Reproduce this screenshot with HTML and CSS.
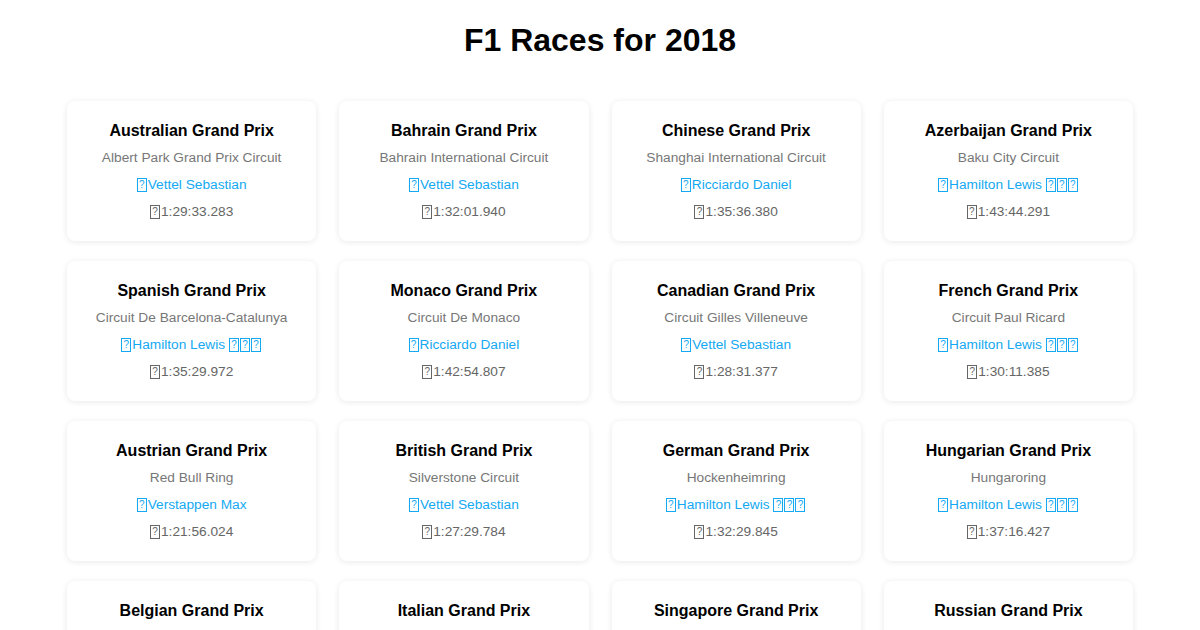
FILE: index.html
```html
<!DOCTYPE html>
<html>
<head>
<meta charset="utf-8">
<link rel="stylesheet" href="styles.css">
</head>
<body>
<div class="page">
  <h1 class="title">F1 Races for 2018</h1>
  <div class="grid">
    <div class="card"><h3>Australian Grand Prix</h3><p class="circuit">Albert Park Grand Prix Circuit</p><p class="driver"><span class="tofu">?</span>Vettel Sebastian</p><p class="time"><span class="tofu">?</span>1:29:33.283</p></div>
    <div class="card"><h3>Bahrain Grand Prix</h3><p class="circuit">Bahrain International Circuit</p><p class="driver"><span class="tofu">?</span>Vettel Sebastian</p><p class="time"><span class="tofu">?</span>1:32:01.940</p></div>
    <div class="card"><h3>Chinese Grand Prix</h3><p class="circuit">Shanghai International Circuit</p><p class="driver"><span class="tofu">?</span>Ricciardo Daniel</p><p class="time"><span class="tofu">?</span>1:35:36.380</p></div>
    <div class="card"><h3>Azerbaijan Grand Prix</h3><p class="circuit">Baku City Circuit</p><p class="driver"><span class="tofu">?</span>Hamilton Lewis <span class="tofu">?</span><span class="tofu">?</span><span class="tofu">?</span></p><p class="time"><span class="tofu">?</span>1:43:44.291</p></div>
    <div class="card"><h3>Spanish Grand Prix</h3><p class="circuit">Circuit De Barcelona-Catalunya</p><p class="driver"><span class="tofu">?</span>Hamilton Lewis <span class="tofu">?</span><span class="tofu">?</span><span class="tofu">?</span></p><p class="time"><span class="tofu">?</span>1:35:29.972</p></div>
    <div class="card"><h3>Monaco Grand Prix</h3><p class="circuit">Circuit De Monaco</p><p class="driver"><span class="tofu">?</span>Ricciardo Daniel</p><p class="time"><span class="tofu">?</span>1:42:54.807</p></div>
    <div class="card"><h3>Canadian Grand Prix</h3><p class="circuit">Circuit Gilles Villeneuve</p><p class="driver"><span class="tofu">?</span>Vettel Sebastian</p><p class="time"><span class="tofu">?</span>1:28:31.377</p></div>
    <div class="card"><h3>French Grand Prix</h3><p class="circuit">Circuit Paul Ricard</p><p class="driver"><span class="tofu">?</span>Hamilton Lewis <span class="tofu">?</span><span class="tofu">?</span><span class="tofu">?</span></p><p class="time"><span class="tofu">?</span>1:30:11.385</p></div>
    <div class="card"><h3>Austrian Grand Prix</h3><p class="circuit">Red Bull Ring</p><p class="driver"><span class="tofu">?</span>Verstappen Max</p><p class="time"><span class="tofu">?</span>1:21:56.024</p></div>
    <div class="card"><h3>British Grand Prix</h3><p class="circuit">Silverstone Circuit</p><p class="driver"><span class="tofu">?</span>Vettel Sebastian</p><p class="time"><span class="tofu">?</span>1:27:29.784</p></div>
    <div class="card"><h3>German Grand Prix</h3><p class="circuit">Hockenheimring</p><p class="driver"><span class="tofu">?</span>Hamilton Lewis <span class="tofu">?</span><span class="tofu">?</span><span class="tofu">?</span></p><p class="time"><span class="tofu">?</span>1:32:29.845</p></div>
    <div class="card"><h3>Hungarian Grand Prix</h3><p class="circuit">Hungaroring</p><p class="driver"><span class="tofu">?</span>Hamilton Lewis <span class="tofu">?</span><span class="tofu">?</span><span class="tofu">?</span></p><p class="time"><span class="tofu">?</span>1:37:16.427</p></div>
    <div class="card"><h3>Belgian Grand Prix</h3><p class="circuit">Circuit De Spa-Francorchamps</p><p class="driver"><span class="tofu">?</span>Vettel Sebastian</p><p class="time"><span class="tofu">?</span>1:23:34.476</p></div>
    <div class="card"><h3>Italian Grand Prix</h3><p class="circuit">Autodromo Nazionale Di Monza</p><p class="driver"><span class="tofu">?</span>Hamilton Lewis <span class="tofu">?</span><span class="tofu">?</span><span class="tofu">?</span></p><p class="time"><span class="tofu">?</span>1:16:54.484</p></div>
    <div class="card"><h3>Singapore Grand Prix</h3><p class="circuit">Marina Bay Street Circuit</p><p class="driver"><span class="tofu">?</span>Hamilton Lewis <span class="tofu">?</span><span class="tofu">?</span><span class="tofu">?</span></p><p class="time"><span class="tofu">?</span>1:51:11.611</p></div>
    <div class="card"><h3>Russian Grand Prix</h3><p class="circuit">Sochi Autodrom</p><p class="driver"><span class="tofu">?</span>Hamilton Lewis <span class="tofu">?</span><span class="tofu">?</span><span class="tofu">?</span></p><p class="time"><span class="tofu">?</span>1:27:25.181</p></div>
  </div>
</div>
</body>
</html>
```
FILE: styles.css
```css
html, body {
  margin: 0;
  padding: 0;
  background: #ffffff;
}
body {
  font-family: "Liberation Sans", Arial, sans-serif;
  color: #000;
}
.page {
  width: 1066px;
  margin: 0 auto;
  padding-top: 22px;
}
.title {
  margin: 0 0 42px;
  font-size: 32px;
  line-height: 37px;
  font-weight: bold;
  text-align: center;
}
.grid {
  display: grid;
  grid-template-columns: repeat(4, 1fr);
  column-gap: 23px;
  row-gap: 20px;
}
.card {
  background: #fff;
  border-radius: 8px;
  box-shadow: 0 1px 6px rgba(0, 0, 0, 0.09);
  padding: 20px 10px;
  text-align: center;
}
.card h3 {
  margin: 0;
  font-size: 16px;
  line-height: 19px;
  font-weight: bold;
}
.card p {
  margin: 8px 0 0;
  font-size: 13.7px;
  line-height: 19px;
}
.circuit {
  color: #777;
}
.driver {
  color: #14a9f2;
}
.time {
  color: #666;
}
.tofu {
  display: inline-block;
  box-sizing: border-box;
  width: 10px;
  height: 14px;
  margin-right: 1px;
  border: 1px solid currentColor;
  font-size: 10px;
  line-height: 12px;
  text-align: center;
  vertical-align: middle;
  overflow: hidden;
}
```
